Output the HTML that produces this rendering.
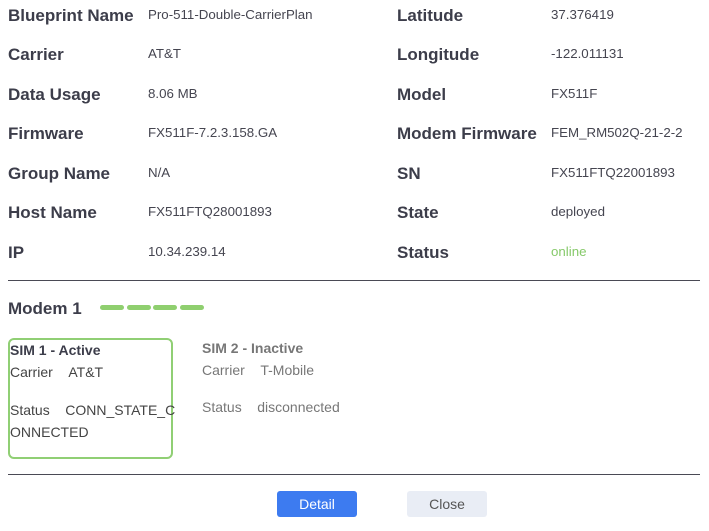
<!DOCTYPE html>
<html><head><meta charset="utf-8"><style>
body{margin:0;width:709px;height:531px;background:#fff;font-family:"Liberation Sans",sans-serif;position:relative;overflow:hidden}
.a{position:absolute;white-space:nowrap;line-height:1}
.l{font-size:17px;font-weight:bold;color:#3c3d4a}
.v{font-size:13.3px;color:#454550}
.g{color:#86c96a}
.hr{position:absolute;left:8px;width:692px;height:1px;background:#4a4a55}
.bar{position:absolute;top:305px;width:24px;height:5px;border-radius:3px;background:#8fcf6f}
.s{font-size:14px;color:#444}
.s2{font-size:14px;color:#777}
</style></head><body>
<div class="a l" style="left:8px;top:7px">Blueprint Name</div><div class="a v" style="left:148px;top:8px">Pro-511-Double-CarrierPlan</div>
<div class="a l" style="left:8px;top:46px">Carrier</div><div class="a v" style="left:148px;top:47px">AT&amp;T</div>
<div class="a l" style="left:8px;top:86px">Data Usage</div><div class="a v" style="left:148px;top:87px">8.06 MB</div>
<div class="a l" style="left:8px;top:125px">Firmware</div><div class="a v" style="left:148px;top:126px">FX511F-7.2.3.158.GA</div>
<div class="a l" style="left:8px;top:165px">Group Name</div><div class="a v" style="left:148px;top:166px">N/A</div>
<div class="a l" style="left:8px;top:204px">Host Name</div><div class="a v" style="left:148px;top:205px">FX511FTQ28001893</div>
<div class="a l" style="left:8px;top:244px">IP</div><div class="a v" style="left:148px;top:245px">10.34.239.14</div>

<div class="a l" style="left:397px;top:7px">Latitude</div><div class="a v" style="left:551px;top:8px">37.376419</div>
<div class="a l" style="left:397px;top:46px">Longitude</div><div class="a v" style="left:551px;top:47px">-122.011131</div>
<div class="a l" style="left:397px;top:86px">Model</div><div class="a v" style="left:551px;top:87px">FX511F</div>
<div class="a l" style="left:397px;top:125px">Modem Firmware</div><div class="a v" style="left:551px;top:126px">FEM_RM502Q-21-2-2</div>
<div class="a l" style="left:397px;top:165px">SN</div><div class="a v" style="left:551px;top:166px">FX511FTQ22001893</div>
<div class="a l" style="left:397px;top:204px">State</div><div class="a v" style="left:551px;top:205px">deployed</div>
<div class="a l" style="left:397px;top:244px">Status</div><div class="a v g" style="left:551px;top:245px">online</div>

<div class="hr" style="top:280px"></div>
<div class="a l" style="left:8px;top:300px">Modem 1</div>
<div class="bar" style="left:100px"></div><div class="bar" style="left:127px"></div><div class="bar" style="left:153px"></div><div class="bar" style="left:180px"></div>

<div style="position:absolute;left:8px;top:338px;width:161px;height:117px;border:2px solid #90cf74;border-radius:6px"></div>
<div class="a" style="left:10px;top:343px;font-size:14px;font-weight:bold;color:#3c3d4a">SIM 1 - Active</div>
<div class="a s" style="left:10px;top:365px">Carrier&nbsp;&nbsp;&nbsp;&nbsp;AT&amp;T</div>
<div class="a s" style="left:10px;top:403px">Status&nbsp;&nbsp;&nbsp;&nbsp;CONN_STATE_C</div>
<div class="a s" style="left:10px;top:425px">ONNECTED</div>

<div class="a" style="left:202px;top:341px;font-size:14px;font-weight:bold;color:#777">SIM 2 - Inactive</div>
<div class="a s2" style="left:202px;top:363px">Carrier&nbsp;&nbsp;&nbsp;&nbsp;T-Mobile</div>
<div class="a s2" style="left:202px;top:400px">Status&nbsp;&nbsp;&nbsp;&nbsp;disconnected</div>

<div class="hr" style="top:474px"></div>
<div style="position:absolute;left:277px;top:491px;width:80px;height:26px;border-radius:3px;background:#3d7bf0;color:#fff;font-size:14px;line-height:26px;text-align:center">Detail</div>
<div style="position:absolute;left:407px;top:491px;width:80px;height:26px;border-radius:3px;background:#e9edf5;color:#555;font-size:14px;line-height:26px;text-align:center">Close</div>
</body></html>
